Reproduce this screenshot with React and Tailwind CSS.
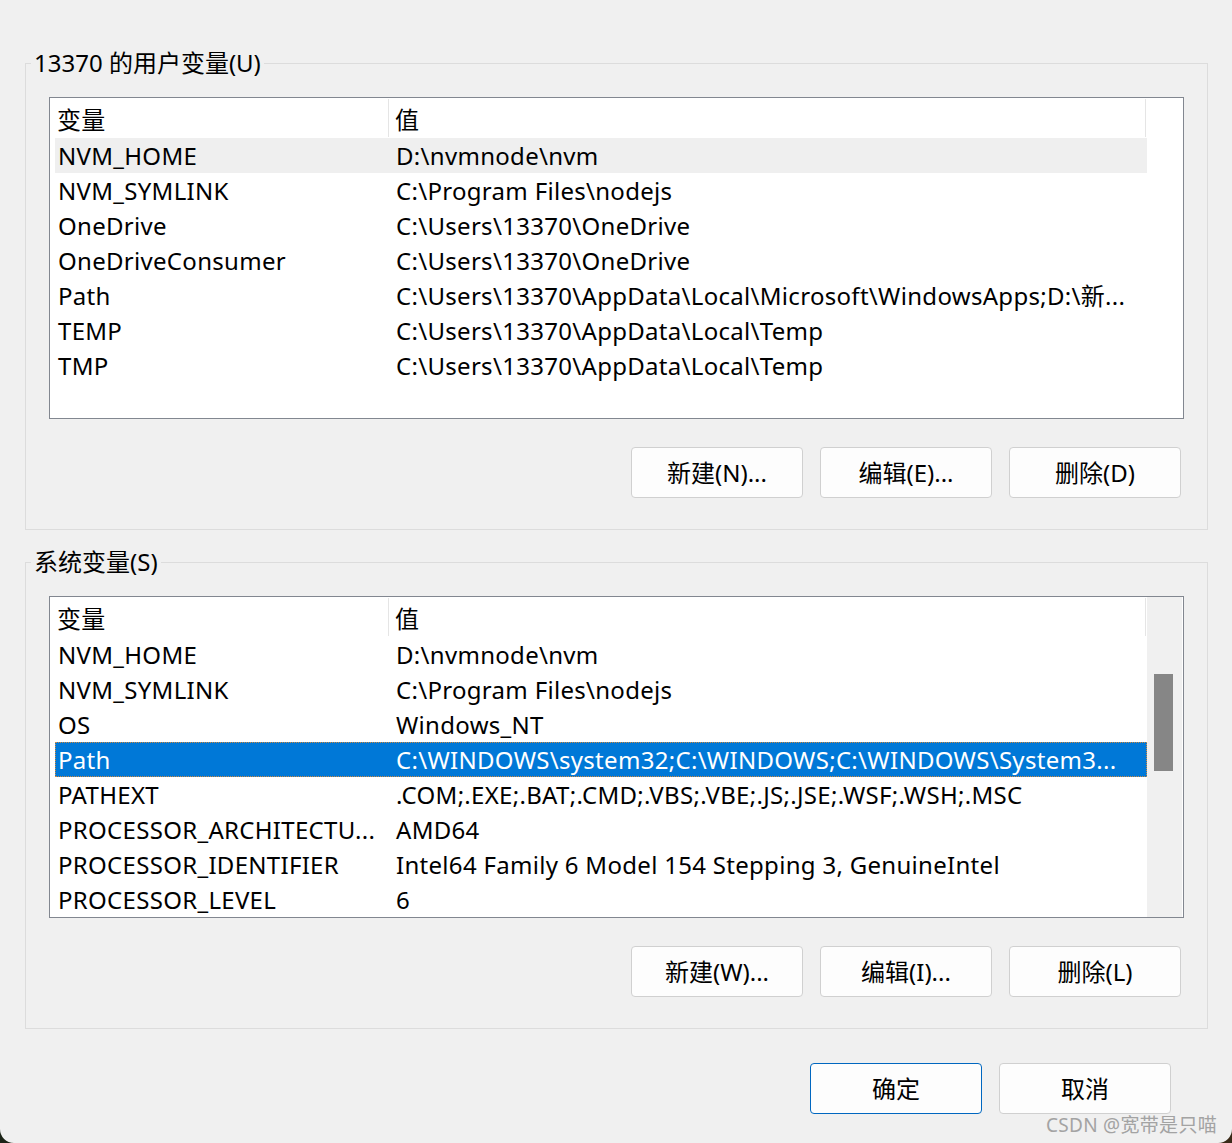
const userVars = [
  ["NVM_HOME", "D:\\nvmnode\\nvm"],
  ["NVM_SYMLINK", "C:\\Program Files\\nodejs"],
  ["OneDrive", "C:\\Users\\13370\\OneDrive"],
  ["OneDriveConsumer", "C:\\Users\\13370\\OneDrive"],
  ["Path", "C:\\Users\\13370\\AppData\\Local\\Microsoft\\WindowsApps;D:\\新..."],
  ["TEMP", "C:\\Users\\13370\\AppData\\Local\\Temp"],
  ["TMP", "C:\\Users\\13370\\AppData\\Local\\Temp"],
];

const sysVars = [
  ["NVM_HOME", "D:\\nvmnode\\nvm"],
  ["NVM_SYMLINK", "C:\\Program Files\\nodejs"],
  ["OS", "Windows_NT"],
  ["Path", "C:\\WINDOWS\\system32;C:\\WINDOWS;C:\\WINDOWS\\System3..."],
  ["PATHEXT", ".COM;.EXE;.BAT;.CMD;.VBS;.VBE;.JS;.JSE;.WSF;.WSH;.MSC"],
  ["PROCESSOR_ARCHITECTU...", "AMD64"],
  ["PROCESSOR_IDENTIFIER", "Intel64 Family 6 Model 154 Stepping 3, GenuineIntel"],
  ["PROCESSOR_LEVEL", "6"],
];

function Button({ children, primary }) {
  return (
    <button
      className={
        primary
          ? "w-[172px] h-[51px] rounded-[4px] border border-[#0067c0] bg-[#fdfdfd] text-[24px] text-black"
          : "w-[172px] h-[51px] rounded-[4px] border border-[#d0d0d0] bg-[#fdfdfd] text-[24px] text-black"
      }
    >
      {children}
    </button>
  );
}

function VarList({ rows, hover, selected, scroll }) {
  return (
    <div className="w-[1135px] h-[322px] border border-[#828790] bg-white flex overflow-hidden tracking-[0.3px]">
      <div className="w-[1097px] flex flex-col">
        <div className="flex h-[40px] shrink-0 items-center">
          <div className="w-[339px] h-[38px] pl-[7px] pt-[3px] flex items-center border-r border-[#e5e5e5]">变量</div>
          <div className="w-[757px] h-[38px] pl-[6px] pt-[3px] flex items-center border-r border-[#e5e5e5]">值</div>
        </div>
        {rows.map(([name, value], i) => (
          <div
            key={name + i}
            className={
              i === selected
                ? "ml-[5px] w-[1092px] h-[35px] shrink-0 flex items-center bg-[#0078d7] text-white outline outline-1 outline-dotted outline-[#d08a40] -outline-offset-1"
                : i === hover
                ? "ml-[5px] w-[1092px] h-[35px] shrink-0 flex items-center bg-[#efefef]"
                : "ml-[5px] w-[1092px] h-[35px] shrink-0 flex items-center"
            }
          >
            <div className="w-[334px] pl-[3px] whitespace-nowrap overflow-hidden">{name}</div>
            <div className="flex-1 pl-[7px] whitespace-nowrap overflow-hidden">{value}</div>
          </div>
        ))}
      </div>
      {scroll ? (
        <div className="w-[35px] h-full bg-[#f0f0f0] pt-[77px] pl-[7px]">
          <div className="w-[19px] h-[97px] bg-[#868686]" />
        </div>
      ) : null}
    </div>
  );
}

function Group({ title, rows, hover, selected, scroll, buttons, className }) {
  return (
    <fieldset className={"ml-[25px] w-[1183px] border border-[#dcdcdc] " + className}>
      <legend className="ml-[5px] px-[3px] leading-[32px]">{title}</legend>
      <div className="pl-[23px] pt-[18px] pb-[31px]">
        <VarList rows={rows} hover={hover} selected={selected} scroll={scroll} />
        <div className="flex justify-end gap-[17px] pr-[26px] mt-[28px]">
          {buttons.map((b) => (
            <Button key={b}>{b}</Button>
          ))}
        </div>
      </div>
    </fieldset>
  );
}

export default function App() {
  return (
    <div
      className="relative w-[1232px] h-[1143px] bg-[#f0f0f0] text-black text-[24px] leading-[32px] overflow-hidden"
      style={{ fontFamily: '"Noto Sans", "Noto Sans CJK SC", sans-serif' }}
    >
      <div className="pt-[47px]">
        <Group
          title="13370 的用户变量(U)"
          rows={userVars}
          hover={0}
          buttons={["新建(N)...", "编辑(E)...", "删除(D)"]}
          className=""
        />
        <Group
          title="系统变量(S)"
          rows={sysVars}
          selected={3}
          scroll
          buttons={["新建(W)...", "编辑(I)...", "删除(L)"]}
          className="mt-[16px]"
        />
        <div className="flex justify-end gap-[17px] pr-[61px] mt-[34px]">
          <Button primary>确定</Button>
          <Button>取消</Button>
        </div>
      </div>

      <div className="absolute right-[15px] bottom-[6px] text-[19px] leading-[24px] tracking-[0.3px] text-[#a3a3a3]">CSDN @宽带是只喵</div>

      <svg className="absolute left-0 bottom-0" width="14" height="14" viewBox="0 0 14 14">
        <path d="M0 0 A14 14 0 0 0 14 14 L0 14 Z" fill="#1c2418" />
      </svg>
      <svg className="absolute right-0 bottom-0" width="14" height="14" viewBox="0 0 14 14">
        <path d="M14 0 A14 14 0 0 1 0 14 L14 14 Z" fill="#3a2a18" />
      </svg>
    </div>
  );
}
